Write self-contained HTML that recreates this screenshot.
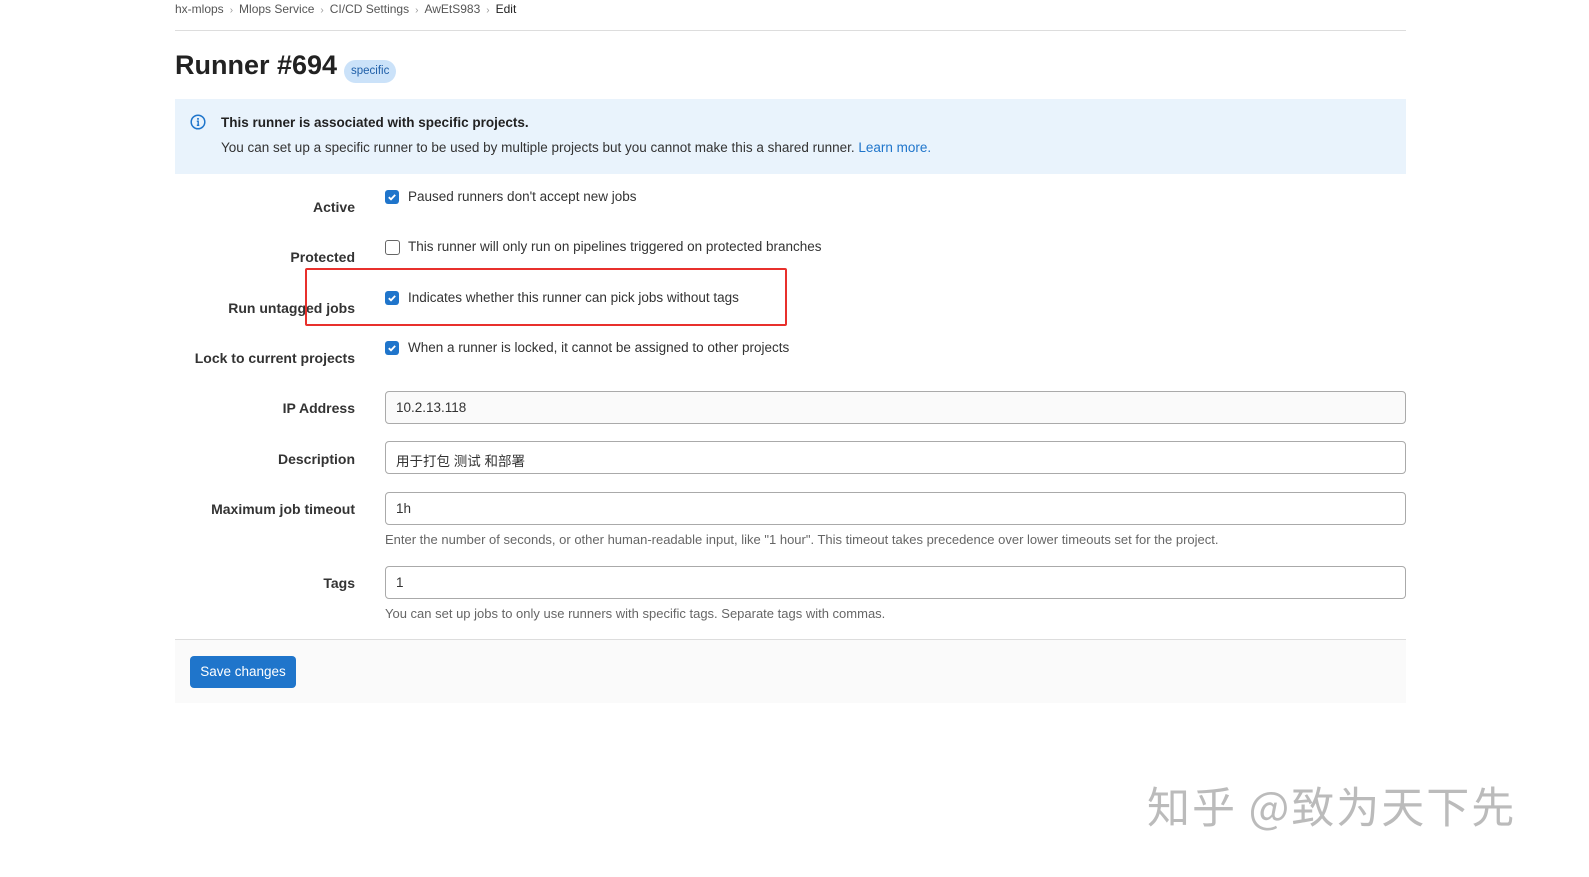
<!DOCTYPE html>
<html><head><meta charset="utf-8"><style>
body{margin:0;width:1589px;height:877px;background:#fff;font-family:"Liberation Sans","Noto Sans CJK SC",sans-serif;color:#333;position:relative;overflow:hidden}
.a{position:absolute;white-space:nowrap}
.bc{font-size:12px;color:#555;top:2px;left:175px}
.bc b{color:#222;font-weight:normal}
.bc span{color:#999;margin:0 6px;font-size:10px}
.lbl{font-size:14px;font-weight:bold;color:#333;right:1234px;text-align:right}
.cb{width:14px;height:14px;border-radius:3px;background:#1f75cb;left:385px}
.cb svg{display:block}
.cbo{width:13px;height:13px;border-radius:3px;border:1px solid #666;left:385px;background:#fff}
.t{font-size:13.5px;color:#333;left:408px}
.inp{left:385px;width:1021px;height:33px;border:1px solid #aaa;border-radius:4px;box-sizing:border-box;font-size:13.5px;padding:8px 10px;color:#333}
.help{left:385px;font-size:13px;color:#666}
</style></head><body>
<div class="a bc">hx-mlops<span>›</span>Mlops Service<span>›</span>CI/CD Settings<span>›</span>AwEtS983<span>›</span><b>Edit</b></div>
<div class="a" style="left:175px;top:30px;width:1231px;height:1px;background:#ddd"></div>
<div class="a" style="left:175px;top:50px;font-size:27px;font-weight:bold;color:#222">Runner #694</div>
<div class="a" style="left:344px;top:60px;height:23px;padding:0 7px;border-radius:12px;background:#cbe2f9;color:#1f5fa8;font-size:11.5px;line-height:23px">specific</div>
<div class="a" style="left:175px;top:99px;width:1231px;height:75px;background:#e9f3fc"></div>
<svg class="a" style="left:190px;top:114px" width="16" height="16" viewBox="0 0 16 16"><circle cx="8" cy="8" r="6.8" fill="none" stroke="#1f75cb" stroke-width="1.5"/><circle cx="8" cy="4.9" r="1" fill="#1f75cb"/><path d="M6.8 7.2H8.2V11.3M6.8 11.3H9.3" stroke="#1f75cb" stroke-width="1.4" fill="none"/></svg>
<div class="a" style="left:221px;top:115px;font-size:13.5px;font-weight:bold;color:#222">This runner is associated with specific projects.</div>
<div class="a" style="left:221px;top:140px;font-size:13.5px;color:#333">You can set up a specific runner to be used by multiple projects but you cannot make this a shared runner. <span style="color:#1f75cb">Learn more.</span></div>

<div class="a lbl" style="top:199px">Active</div>
<div class="a cb" style="top:190px"><svg width="14" height="14"><path d="M3.8 7.2L6 9.3 10.2 4.9" stroke="#fff" stroke-width="1.8" fill="none"/></svg></div>
<div class="a t" style="top:189px">Paused runners don't accept new jobs</div>

<div class="a lbl" style="top:249px">Protected</div>
<div class="a cbo" style="top:240px"></div>
<div class="a t" style="top:239px">This runner will only run on pipelines triggered on protected branches</div>

<div class="a lbl" style="top:300px">Run untagged jobs</div>
<div class="a cb" style="top:291px"><svg width="14" height="14"><path d="M3.8 7.2L6 9.3 10.2 4.9" stroke="#fff" stroke-width="1.8" fill="none"/></svg></div>
<div class="a t" style="top:290px">Indicates whether this runner can pick jobs without tags</div>
<div class="a" style="left:305px;top:268px;width:478px;height:54px;border:2px solid #e8302c;border-radius:2px"></div>

<div class="a lbl" style="top:350px">Lock to current projects</div>
<div class="a cb" style="top:341px"><svg width="14" height="14"><path d="M3.8 7.2L6 9.3 10.2 4.9" stroke="#fff" stroke-width="1.8" fill="none"/></svg></div>
<div class="a t" style="top:340px">When a runner is locked, it cannot be assigned to other projects</div>

<div class="a lbl" style="top:400px">IP Address</div>
<div class="a inp" style="top:391px;background:#fafafa">10.2.13.118</div>
<div class="a lbl" style="top:451px">Description</div>
<div class="a inp" style="top:441px">用于打包 测试 和部署</div>
<div class="a lbl" style="top:501px">Maximum job timeout</div>
<div class="a inp" style="top:492px">1h</div>
<div class="a help" style="top:532px">Enter the number of seconds, or other human-readable input, like "1 hour". This timeout takes precedence over lower timeouts set for the project.</div>
<div class="a lbl" style="top:575px">Tags</div>
<div class="a inp" style="top:566px">1</div>
<div class="a help" style="top:606px">You can set up jobs to only use runners with specific tags. Separate tags with commas.</div>

<div class="a" style="left:175px;top:639px;width:1231px;height:63px;background:#fafafa;border-top:1px solid #ddd"></div>
<div class="a" style="left:190px;top:656px;width:106px;height:32px;background:#1f75cb;border-radius:4px;color:#fff;font-size:13.5px;line-height:32px;text-align:center">Save changes</div>

<div class="a" style="left:1147px;top:774px;font-size:43px;color:#bbb;font-family:'Noto Sans CJK SC',sans-serif;letter-spacing:2px">知乎 @致为天下先</div>
</body></html>
